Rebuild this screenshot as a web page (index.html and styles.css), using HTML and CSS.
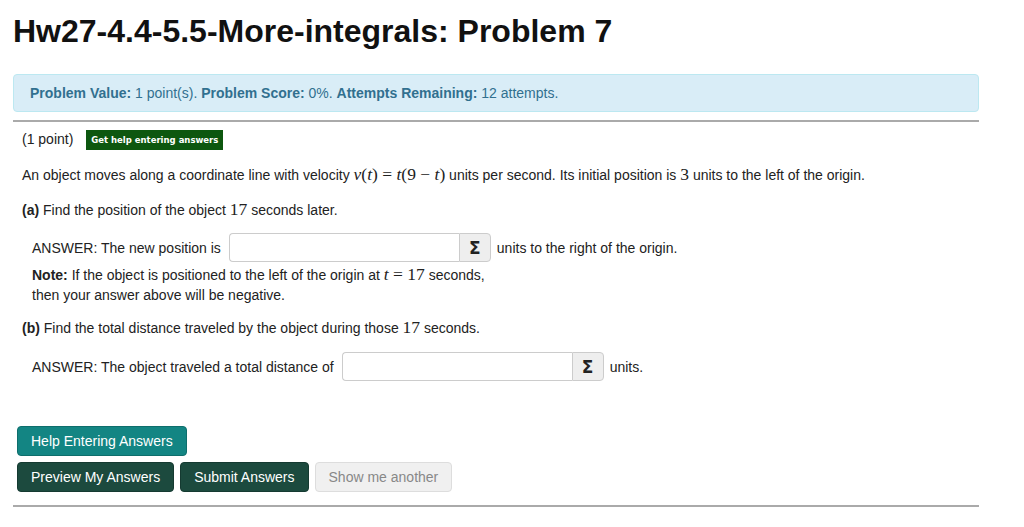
FILE: index.html
```html
<!DOCTYPE html>
<html lang="en">
<head>
    <meta charset="UTF-8">
    <meta name="viewport" content="width=device-width, initial-scale=1.0">
    <title>Hw27-4.4-5.5-More-integrals: Problem 7</title>
    <link rel="stylesheet" href="styles.css">
</head>
<body>
    <div class="page">
        <h1>Hw27-4.4-5.5-More-integrals: Problem 7</h1>

        <div class="alert">
            <b>Problem Value:</b> 1 point(s). <b>Problem Score:</b> 0%. <b>Attempts Remaining:</b> 12 attempts.
        </div>

        <div class="problem">
            <p class="points">(1 point) <a class="helpLink" href="#">Get help entering answers</a></p>

            <p>An object moves along a coordinate line with velocity <span class="math"><i>v</i>(<i>t</i>) = <i>t</i>(9 &minus; <i>t</i>)</span> units per second. Its initial position is <span class="math">3</span> units to the left of the origin.</p>

            <p class="question"><b>(a)</b> Find the position of the object <span class="math">17</span> seconds later.</p>

            <div class="answer">
                <div class="answerRow">
                    ANSWER: The new position is
                    <span class="inputGroup">
                        <input type="text">
                        <button class="sigma">&Sigma;</button>
                    </span>
                    units to the right of the origin.
                </div>
                <div class="note"><b>Note:</b> If the object is positioned to the left of the origin at <span class="math"><i>t</i> = 17</span> seconds,<br>then your answer above will be negative.</div>
            </div>

            <p class="question wide"><b>(b)</b> Find the total distance traveled by the object during those <span class="math">17</span> seconds.</p>

            <div class="answer">
                <div class="answerRow">
                    ANSWER: The object traveled a total distance of
                    <span class="inputGroup">
                        <input type="text">
                        <button class="sigma">&Sigma;</button>
                    </span>
                    units.
                </div>
            </div>
        </div>

        <div class="buttons">
            <div class="row">
                <button class="btn help">Help Entering Answers</button>
            </div>
            <div class="row">
                <button class="btn dark">Preview My Answers</button>
                <button class="btn dark">Submit Answers</button>
                <button class="btn disabled">Show me another</button>
            </div>
        </div>
    </div>
</body>
</html>
```

FILE: styles.css
```css
body {
    font-family: "Liberation Sans", Arial, sans-serif;
    font-size: 14px;
    color: #222;
    background-color: white;
    margin: 0;
    padding: 0;
}
.page {
    width: 966px;
    padding: 13px 0 0 13px;
}
h1 {
    font-size: 32px;
    font-weight: bold;
    color: #111;
    margin: 0 0 25px 0;
    line-height: 36px;
}
.alert {
    background-color: #d9edf7;
    border: 1px solid #bce8f1;
    border-radius: 4px;
    color: #31708f;
    padding: 10px 16px;
    line-height: 16px;
}
.problem {
    border-top: 2px solid #aaa;
    margin-top: 8px;
    padding: 8px 9px 0 9px;
}
.problem p {
    margin: 0 0 17px 0;
    line-height: 18px;
}
.problem p.points {
    margin-bottom: 16px;
}
.problem p.question {
    margin-bottom: 14px;
}
.problem p.question.wide {
    margin-bottom: 15px;
}
.helpLink {
    display: inline-block;
    background-color: #0d570f;
    color: white;
    font-family: "DejaVu Sans", sans-serif;
    font-weight: bold;
    font-size: 8.5px;
    text-decoration: none;
    padding: 4px 5px;
    margin-left: 9px;
    line-height: 12px;
    vertical-align: 1px;
}
.math {
    font-family: "Liberation Serif", "Times New Roman", serif;
    font-size: 17.5px;
    line-height: 14px;
}
.answer {
    padding-left: 10px;
    margin-bottom: 14px;
}
.answerRow {
    display: flex;
    align-items: center;
    gap: 6px;
    line-height: 18px;
}
.inputGroup {
    display: flex;
    margin-left: 2px;
}
.inputGroup input {
    width: 230px;
    height: 29px;
    box-sizing: border-box;
    border: 1px solid #ccc;
    border-right: none;
    border-radius: 4px 0 0 4px;
    margin: 0;
    padding: 4px 8px;
    font-size: 14px;
}
.sigma {
    width: 32px;
    height: 29px;
    box-sizing: border-box;
    border: 1px solid #ccc;
    border-radius: 0 4px 4px 0;
    background-color: #eee;
    color: #222;
    font-family: "DejaVu Sans", sans-serif;
    font-weight: bold;
    font-size: 17px;
    margin: 0;
    padding: 0;
}
.note {
    line-height: 20px;
    margin-top: 3px;
}
.buttons {
    padding: 31px 0 7px 4px;
    border-bottom: 2px solid #aaa;
}
.row {
    display: flex;
    gap: 6px;
    margin-bottom: 6px;
}
.btn {
    font-family: "Liberation Sans", Arial, sans-serif;
    font-size: 14px;
    height: 30px;
    padding: 0 13px;
    border-radius: 4px;
    border: 1px solid transparent;
    color: white;
    cursor: pointer;
}
.btn.help {
    background-color: #138583;
    border-color: #0e6e6c;
}
.btn.dark {
    background-color: #1c4a3e;
    border-color: #153a31;
}
.btn.disabled {
    background-color: #f0f0f0;
    border-color: #ddd;
    color: #888;
}
```
